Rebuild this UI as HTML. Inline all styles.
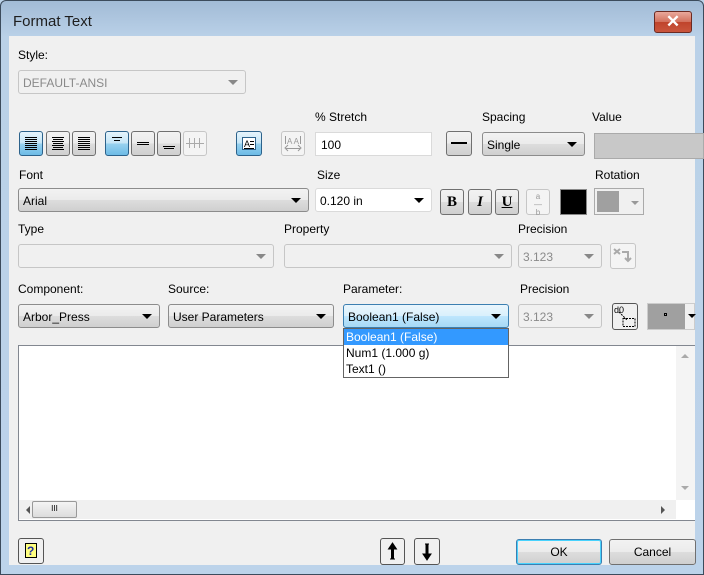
<!DOCTYPE html>
<html><head><meta charset="utf-8"><style>
*{box-sizing:border-box;margin:0;padding:0}
body{width:704px;height:575px;overflow:hidden;background:#bcd3ea;font-family:"Liberation Sans",sans-serif;font-size:12px;color:#000;position:relative}
.a{position:absolute}
.frame{left:0;top:0;width:704px;height:575px;background:linear-gradient(#a2bbd6,#bad1e8 36px,#bcd3ea);border:1px solid #3c4b5c;border-radius:6px 6px 0 0}
.client{left:9px;top:36px;width:686px;height:529px;background:#f0f0f0}
.lbl{position:absolute;font-size:12px;white-space:nowrap}
.combo{position:absolute;height:24px;border:1px solid #8c8c8c;border-radius:3px;background:linear-gradient(#f2f2f2,#ebebeb 50%,#dddddd 51%,#cfcfcf);padding:5px 0 0 4px;font-size:12px;white-space:nowrap;overflow:hidden}
.combo:after{content:"";position:absolute;right:7px;top:9px;border:5px solid transparent;border-top:5px solid #000;border-bottom:0}
.dis{background:#f0f0f0;border-color:#c6c6c6;color:#8a8a8a}
.dis:after{border-top-color:#888}
.inp{position:absolute;height:24px;background:#fff;border:1px solid #dadada;padding:5px 0 0 5px;font-size:12px}
.btn{position:absolute;width:24px;height:25px;border:1px solid #707070;border-radius:3px;background:linear-gradient(#f2f2f2,#ebebeb 50%,#dddddd 51%,#cfcfcf)}
.sel{background:linear-gradient(#e5f4fc,#c4e5f6 50%,#98d1ef 51%,#6dbbe6);border-color:#2c628b}
.dbtn{border-color:#c6c6c6;background:#f4f4f4}
</style></head><body>
<div class="a frame"></div>
<div class="a" style="left:13px;top:13px;font-size:15px;color:#1e1e1e">Format Text</div>
<div class="a" style="left:654px;top:11px;width:38px;height:22px;border:1px solid #6b2a22;border-radius:3px;background:linear-gradient(#e9a99c,#d2705c 50%,#c0442c 51%,#c9553c);color:#fff;font-size:17px;font-weight:bold;text-align:center;line-height:20px">✕</div>
<div class="a client"></div>

<div class="lbl" style="left:18px;top:48px">Style:</div>
<div class="combo dis" style="left:18px;top:70px;width:228px;height:24px">DEFAULT-ANSI</div>

<div class="lbl" style="left:315px;top:110px">% Stretch</div>
<div class="lbl" style="left:482px;top:110px">Spacing</div>
<div class="lbl" style="left:592px;top:110px">Value</div>

<div class="btn sel" style="left:19px;top:131px"><svg width="22" height="23"><g stroke="#000"><path d="M5 5.5h12M5 7.5h12M5 9.5h12M5 11.5h12M5 13.5h12M5 15.5h12M5 17.5h12"/></g></svg></div>
<div class="btn" style="left:46px;top:131px"><svg width="22" height="23"><g stroke="#000"><path d="M5 5.5h12M6 7.5h10M5 9.5h12M6 11.5h10M5 13.5h12M6 15.5h10M5 17.5h12"/></g></svg></div>
<div class="btn" style="left:72px;top:131px"><svg width="22" height="23"><g stroke="#000"><path d="M5 5.5h12M5 7.5h12M5 9.5h12M5 11.5h12M5 13.5h12M5 15.5h12M5 17.5h12"/></g></svg></div>
<div class="btn sel" style="left:105px;top:131px"><svg width="22" height="23"><path d="M6 5.5h10M8 8.5h6" stroke="#000"/></svg></div>
<div class="btn" style="left:131px;top:131px"><svg width="22" height="23"><path d="M5 10.5h12M5 12.5h12" stroke="#000"/></svg></div>
<div class="btn" style="left:157px;top:131px"><svg width="22" height="23"><path d="M5 14.5h12M6 16.5h10" stroke="#000"/></svg></div>
<div class="btn dbtn" style="left:183px;top:131px"><svg width="22" height="23"><g stroke="#aaa"><path d="M2 11.5h18M5.5 6v10M10.5 6v10M15.5 6v10"/></g></svg></div>
<div class="btn sel" style="left:236px;top:131px;width:26px"><svg width="24" height="23"><rect x="5.5" y="5.5" width="13" height="12" fill="#fff" stroke="#2c628b"/><text x="7" y="15" font-size="9" font-family="Liberation Sans">A</text><path d="M13 9.5h4M13 12.5h4M7 16.5h10" stroke="#000"/></svg></div>
<div class="btn dbtn" style="left:281px;top:131px;width:24px"><svg width="22" height="23"><g stroke="#999" fill="none"><path d="M3.5 4v8M18.5 4v8M4 16.5h14M6 19l-3-3 3-3M16 19l3-3-3-3"/></g><text x="5" y="12" font-size="8" fill="#999">A A</text></svg></div>
<div class="inp" style="left:315px;top:132px;width:117px">100</div>
<div class="btn" style="left:446px;top:131px;width:26px"><svg width="24" height="23"><path d="M4 11h16" stroke="#000" stroke-width="2"/></svg></div>
<div class="combo" style="left:482px;top:132px;width:103px">Single</div>
<div class="a" style="left:594px;top:133px;width:110px;height:26px;background:#c8c8c8;border:1px solid #aaa"></div>

<div class="lbl" style="left:19px;top:168px">Font</div>
<div class="lbl" style="left:317px;top:168px">Size</div>
<div class="lbl" style="left:595px;top:168px">Rotation</div>
<div class="combo" style="left:18px;top:188px;width:291px">Arial</div>
<div class="combo" style="left:315px;top:188px;width:117px;background:#fff;border-color:#dadada">0.120 in</div>
<div class="btn" style="left:440px;top:189px;height:26px;font:bold 15px 'Liberation Serif',serif;text-align:center;line-height:24px">B</div>
<div class="btn" style="left:468px;top:189px;height:26px;font:bold italic 15px 'Liberation Serif',serif;text-align:center;line-height:24px">I</div>
<div class="btn" style="left:495px;top:189px;height:26px;font:bold 15px 'Liberation Serif',serif;text-align:center;line-height:24px;text-decoration:underline">U</div>
<div class="btn dbtn" style="left:526px;top:189px;height:26px;font-size:8px;color:#999;text-align:center;line-height:8px;padding-top:3px">a<br>—<br>b</div>
<div class="a" style="left:560px;top:189px;width:27px;height:26px;background:#000;border:1px solid #888"></div>
<div class="a" style="left:594px;top:188px;width:50px;height:27px;border:1px solid #aaa;background:#f0f0f0"><div class="a" style="left:2px;top:2px;width:22px;height:21px;background:#a0a0a0"></div><div class="a" style="left:36px;top:12px;border:4px solid transparent;border-top:4px solid #999"></div></div>

<div class="lbl" style="left:18px;top:222px">Type</div>
<div class="lbl" style="left:284px;top:222px">Property</div>
<div class="lbl" style="left:518px;top:222px">Precision</div>
<div class="combo dis" style="left:18px;top:244px;width:256px"></div>
<div class="combo dis" style="left:284px;top:244px;width:228px"></div>
<div class="combo dis" style="left:518px;top:244px;width:84px">3.123</div>
<div class="btn dbtn" style="left:610px;top:243px;width:26px;height:26px"><svg width="24" height="24"><g stroke="#aaa" stroke-width="2" fill="none"><path d="M3 5l6 5M9 5l-6 5M11 8h6v9M14 14l3 3 3-3"/></g></svg></div>

<div class="lbl" style="left:18px;top:282px">Component:</div>
<div class="lbl" style="left:168px;top:282px">Source:</div>
<div class="lbl" style="left:343px;top:282px">Parameter:</div>
<div class="lbl" style="left:520px;top:282px">Precision</div>
<div class="combo" style="left:18px;top:304px;width:142px">Arbor_Press</div>
<div class="combo" style="left:168px;top:304px;width:166px">User Parameters</div>
<div class="combo" style="left:343px;top:304px;width:166px;border-color:#3c7fb1;background:linear-gradient(#eaf6fd,#d9f0fc 50%,#bee6fd 51%,#a7d9f5)">Boolean1 (False)</div>
<div class="combo dis" style="left:518px;top:304px;width:84px">3.123</div>
<div class="btn" style="left:612px;top:303px;width:26px;height:27px;background:#f0f0f0;border-color:#555"><svg width="24" height="25"><text x="1" y="9" font-size="9">d0</text><g stroke="#000" fill="none"><path d="M6 8l8 8M10 14.5h12v8h-12z" stroke-dasharray="2 1"/></g></svg></div>
<div class="a" style="left:647px;top:303px;width:48px;height:27px;border:1px solid #ccc;background:#f0f0f0"><div class="a" style="left:0;top:0;width:37px;height:25px;background:#a0a0a0"></div><div class="a" style="left:16px;top:9px;width:3px;height:3px;border:1px solid #000"></div><div class="a" style="left:40px;top:10px;border:4px solid transparent;border-top:4px solid #000"></div></div>

<div class="a" style="left:18px;top:345px;width:677px;height:176px;background:#fff;border:1px solid #828790;border-right:0"></div>
<div class="a" style="left:676px;top:346px;width:19px;height:154px;background:#f4f4f4"><div class="a" style="left:5px;top:8px;border:4px solid transparent;border-bottom:4px solid #aaa;border-top:0"></div><div class="a" style="left:5px;top:140px;border:4px solid transparent;border-top:4px solid #aaa;border-bottom:0"></div></div>
<div class="a" style="left:19px;top:500px;width:657px;height:19px;background:#f0f0f0"><div class="a" style="left:7px;top:6px;border:4px solid transparent;border-right:4px solid #555;border-left:0"></div><div class="a" style="left:13px;top:1px;width:45px;height:17px;border:1px solid #999;border-radius:2px;background:linear-gradient(#f4f4f4,#dcdcdc);font-size:8px;text-align:center;line-height:14px">III</div><div class="a" style="left:642px;top:6px;border:4px solid transparent;border-left:4px solid #555;border-right:0"></div></div>

<div class="a" style="left:343px;top:328px;width:166px;height:50px;background:#fff;border:1px solid #646464"></div>
<div class="a" style="left:344px;top:329px;width:164px;height:16px;background:#3399ff"></div>
<div class="lbl" style="left:346px;top:330px;color:#fff">Boolean1 (False)</div>
<div class="lbl" style="left:346px;top:346px">Num1 (1.000 g)</div>
<div class="lbl" style="left:346px;top:362px">Text1 ()</div>

<div class="btn" style="left:18px;top:538px;width:26px;height:26px;background:#f0f0f0;border-color:#555"><svg width="24" height="24"><rect x="6.5" y="4.5" width="11" height="14" fill="#ffff80" stroke="#000"/><text x="8" y="16" font-size="12" font-weight="bold" fill="#2030a0">?</text></svg></div>
<div class="btn" style="left:380px;top:538px;width:25px;height:27px;background:#f0f0f0;border-color:#555"><svg width="23" height="25"><path d="M11.5 4l-4 6h3v10h2v-10h3z M9 20h5" fill="#000" stroke="#000"/></svg></div>
<div class="btn" style="left:414px;top:538px;width:26px;height:27px;background:#f0f0f0;border-color:#555"><svg width="24" height="25"><path d="M12 21l-4-6h3v-10h2v10h3z M10 5h4" fill="#000" stroke="#000"/></svg></div>
<div class="a" style="left:516px;top:539px;width:86px;height:26px;border:1px solid #3c7fb1;border-radius:3px;background:linear-gradient(#f2f2f2,#ebebeb 50%,#dddddd 51%,#cfcfcf);box-shadow:inset 0 0 0 1px #48d2fd;text-align:center;line-height:24px">OK</div>
<div class="a" style="left:609px;top:539px;width:87px;height:26px;border:1px solid #707070;border-radius:3px;background:linear-gradient(#f2f2f2,#ebebeb 50%,#dddddd 51%,#cfcfcf);text-align:center;line-height:24px">Cancel</div>
</body></html>
